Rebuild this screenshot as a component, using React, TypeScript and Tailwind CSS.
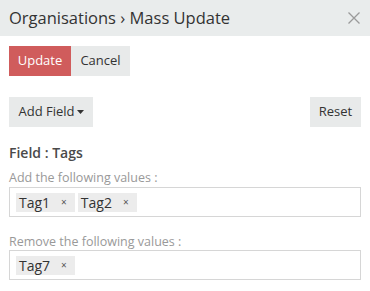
import React from "react";

function Chip({ label }: { label: string }) {
  return (
    <span className="flex items-center h-[19px] bg-[#ececec] pl-[3px] pr-[8px] mr-[3px] text-[14px] text-[#333]">
      <span>{label}</span>
      <span className="ml-[11px] text-[10px] text-[#555] leading-none">×</span>
    </span>
  );
}

export default function App() {
  return (
    <div
      className="w-[370px] h-[291px] bg-white overflow-hidden"
      style={{ fontFamily: '"Open Sans", sans-serif' }}
    >
      <div className="h-[36px] bg-[#e9ecec] flex items-center justify-between pl-[9px] pr-[10px]">
        <span className="text-[16.5px] text-[#333]">Organisations › Mass Update</span>
        <svg width="12" height="12" viewBox="0 0 12 12">
          <path d="M0.5 0.5 L11.5 11.5 M11.5 0.5 L0.5 11.5" stroke="#9a9a9a" strokeWidth="1.3" />
        </svg>
      </div>
      <div className="px-[9px]">
        <div className="flex mt-[10px]">
          <button className="h-[30px] w-[62px] bg-[#d05c5c] text-white text-[13px]">Update</button>
          <button className="h-[30px] w-[59px] bg-[#e8eaea] text-[#333] text-[13px]">Cancel</button>
        </div>
        <div className="flex justify-between mt-[21px]">
          <button className="h-[30px] w-[84px] bg-[#e8eaea] text-[#333] text-[13px] flex items-center justify-center">
            Add Field
            <svg width="7" height="4" viewBox="0 0 7 4" className="ml-[2px]">
              <path d="M0 0 L7 0 L3.5 4 Z" fill="#333" />
            </svg>
          </button>
          <button className="h-[30px] w-[51px] bg-[#e8eaea] text-[#333] text-[13px]">Reset</button>
        </div>
        <div className="mt-[16px] text-[14px] font-semibold text-[#4a4a4a] leading-[20px]">Field : Tags</div>
        <div className="mt-[6px] text-[12.5px] text-[#999] leading-[18px]">Add the following values :</div>
        <div className="h-[30px] border border-[#d6d6d6] flex items-center pl-[6px]">
          <Chip label="Tag1" />
          <Chip label="Tag2" />
        </div>
        <div className="mt-[16px] text-[12.5px] text-[#999] leading-[17px]">Remove the following values :</div>
        <div className="h-[30px] border border-[#d6d6d6] flex items-center pl-[6px]">
          <Chip label="Tag7" />
        </div>
      </div>
    </div>
  );
}
